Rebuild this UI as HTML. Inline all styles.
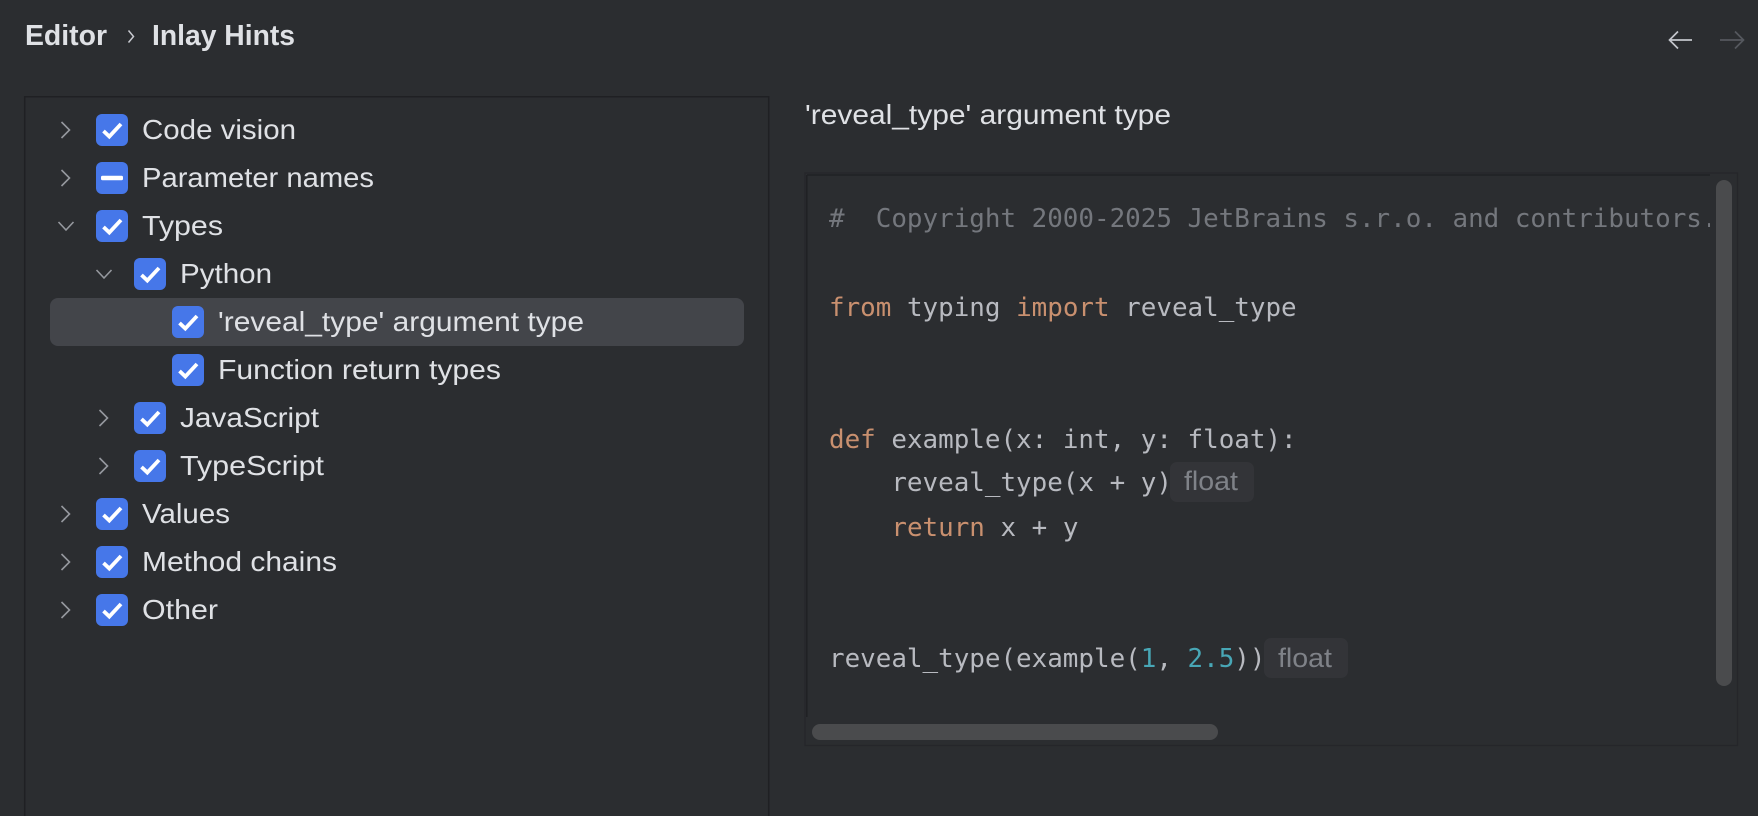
<!DOCTYPE html>
<html><head><meta charset="utf-8"><style>
html,body{margin:0;padding:0;background:#2b2d30;width:1758px;height:816px;overflow:hidden}
svg{display:block}
.t{font-family:"Liberation Sans",sans-serif;font-size:28px;fill:#dfe1e5}
.h{font-family:"Liberation Sans",sans-serif;font-size:28.5px;font-weight:700;fill:#dfe1e5}
.c{font-family:"DejaVu Sans Mono","Liberation Mono",monospace;font-size:25.9px;fill:#b8bac0}
.k{fill:#c9906f}.n{fill:#48a7b6}.m{fill:#74777d}
.f{font-family:"Liberation Sans",sans-serif;font-size:26.5px;fill:#7f8288}
</style></head><body>
<svg width="1758" height="816" viewBox="0 0 1758 816" xmlns="http://www.w3.org/2000/svg">
<defs>
<clipPath id="cl"><rect x="808" y="176" width="902" height="540"/></clipPath>
<g id="cb"><rect width="32" height="32" rx="6" fill="#4677e9"/><path d="M7.5 17l5.8 5.5L25 10" fill="none" stroke="#fff" stroke-width="3.8"/></g>
<path id="cr" d="M0 0l8 8-8 8" fill="none" stroke="#95989e" stroke-width="1.6"/>
<path id="cd" d="M0 0l7.5 8 7.5-8" fill="none" stroke="#95989e" stroke-width="1.6"/>
</defs>
<rect width="1758" height="816" fill="#2b2d30"/>

<!-- header -->
<text class="h" x="25" y="45" textLength="82" lengthAdjust="spacingAndGlyphs">Editor</text>
<path d="M128.5 30.5l5 6-5 6" fill="none" stroke="#c8cad0" stroke-width="1.5"/>
<text class="h" x="152" y="45" textLength="143" lengthAdjust="spacingAndGlyphs">Inlay Hints</text>
<path d="M1692 40H1670M1678 31.5l-8.5 8.5 8.5 8.5" fill="none" stroke="#c4c6cc" stroke-width="1.7"/>
<path d="M1720 40H1743M1735 31.5l8.5 8.5-8.5 8.5" fill="none" stroke="#55585e" stroke-width="1.7"/>

<!-- tree panel -->
<path d="M24.7 816V96.7H768.7V816" fill="none" stroke="#1f2023" stroke-width="1.5"/>
<rect x="50" y="298" width="694" height="48" rx="8" fill="#43454a"/>

<use href="#cr" x="61.5" y="122"/><use href="#cb" x="96" y="114"/>
<text class="t" x="142" y="139" textLength="154" lengthAdjust="spacingAndGlyphs">Code vision</text>

<use href="#cr" x="61.5" y="170"/>
<rect x="96" y="162" width="32" height="32" rx="6" fill="#4677e9"/><rect x="101" y="175.8" width="22" height="4.4" rx="1.5" fill="#fff"/>
<text class="t" x="142" y="187" textLength="232" lengthAdjust="spacingAndGlyphs">Parameter names</text>

<use href="#cd" x="58.5" y="222"/><use href="#cb" x="96" y="210"/>
<text class="t" x="142" y="235" textLength="81" lengthAdjust="spacingAndGlyphs">Types</text>

<use href="#cd" x="96.5" y="270"/><use href="#cb" x="134" y="258"/>
<text class="t" x="180" y="283" textLength="92" lengthAdjust="spacingAndGlyphs">Python</text>

<use href="#cb" x="172" y="306"/>
<text class="t" x="218" y="331" textLength="366" lengthAdjust="spacingAndGlyphs">'reveal_type' argument type</text>

<use href="#cb" x="172" y="354"/>
<text class="t" x="218" y="379" textLength="283" lengthAdjust="spacingAndGlyphs">Function return types</text>

<use href="#cr" x="99.5" y="410"/><use href="#cb" x="134" y="402"/>
<text class="t" x="180" y="427" textLength="139" lengthAdjust="spacingAndGlyphs">JavaScript</text>

<use href="#cr" x="99.5" y="458"/><use href="#cb" x="134" y="450"/>
<text class="t" x="180" y="475" textLength="144" lengthAdjust="spacingAndGlyphs">TypeScript</text>

<use href="#cr" x="61.5" y="506"/><use href="#cb" x="96" y="498"/>
<text class="t" x="142" y="523" textLength="88" lengthAdjust="spacingAndGlyphs">Values</text>

<use href="#cr" x="61.5" y="554"/><use href="#cb" x="96" y="546"/>
<text class="t" x="142" y="571" textLength="195" lengthAdjust="spacingAndGlyphs">Method chains</text>

<use href="#cr" x="61.5" y="602"/><use href="#cb" x="96" y="594"/>
<text class="t" x="142" y="619" textLength="76" lengthAdjust="spacingAndGlyphs">Other</text>

<!-- right -->
<text class="t" x="805" y="124" textLength="366" lengthAdjust="spacingAndGlyphs">'reveal_type' argument type</text>

<rect x="805" y="173" width="932.5" height="572.5" fill="none" stroke="#25262a" stroke-width="1.3"/>
<path d="M807 175H1710M806.8 175V717" fill="none" stroke="#202124" stroke-width="1.5"/>

<g clip-path="url(#cl)" xml:space="preserve">
<text class="c m" x="829" y="227" xml:space="preserve">#  Copyright 2000-2025 JetBrains s.r.o. and contributors.</text>
<text class="c" x="829" y="316" xml:space="preserve"><tspan class="k">from</tspan> typing <tspan class="k">import</tspan> reveal_type</text>
<text class="c" x="829" y="448" xml:space="preserve"><tspan class="k">def</tspan> example(x: int, y: float):</text>
<text class="c" x="829" y="491" xml:space="preserve">    reveal_type(x + y)</text>
<text class="c" x="829" y="536" xml:space="preserve">    <tspan class="k">return</tspan> x + y</text>
<text class="c" x="829" y="667" xml:space="preserve">reveal_type(example(<tspan class="n">1</tspan>, <tspan class="n">2.5</tspan>))</text>
</g>

<rect x="1170" y="462" width="84" height="40" rx="7" fill="#333438"/>
<text class="f" x="1184" y="490" textLength="54" lengthAdjust="spacingAndGlyphs">float</text>
<rect x="1264" y="638" width="84" height="40" rx="7" fill="#333438"/>
<text class="f" x="1278" y="667" textLength="54" lengthAdjust="spacingAndGlyphs">float</text>

<rect x="1716" y="180" width="16" height="506" rx="8" fill="#4a4b4d"/>
<rect x="812" y="724" width="406" height="16" rx="8" fill="#4a4b4d"/>
</svg>
</body></html>
